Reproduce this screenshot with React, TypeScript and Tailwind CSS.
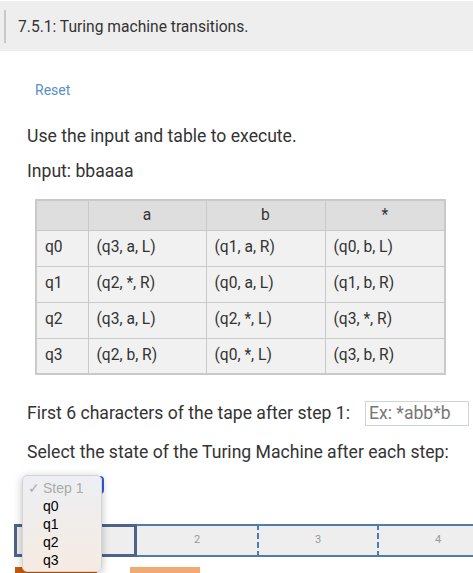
import React from 'react';

const rows = [
  ['q0', '(q3, a, L)', '(q1, a, R)', '(q0, b, L)'],
  ['q1', '(q2, *, R)', '(q0, a, L)', '(q1, b, R)'],
  ['q2', '(q3, a, L)', '(q2, *, L)', '(q3, *, R)'],
  ['q3', '(q2, b, R)', '(q0, *, L)', '(q3, b, R)'],
];

const App: React.FC = () => {
  return (
    <div
      className="w-[473px] h-[573px] overflow-hidden bg-white text-[#333]"
      style={{ fontFamily: 'Roboto, "Liberation Sans", sans-serif' }}
    >
      {/* Header */}
      <div className="mt-px h-[50px] bg-[#eeeeee] flex items-center pl-[4px]">
        <div className="w-[2px] h-[33px] bg-[#c8c8c8]" />
        <h1 className="ml-[12px] mt-[2px] text-[15.6px] leading-[20px] text-[#333] font-normal">
          7.5.1: Turing machine transitions.
        </h1>
      </div>

      <div className="pl-[35px] pt-[27px]">
        <button className="text-[14px] leading-[20px] text-[#5a8fc4]">Reset</button>
      </div>

      <div className="pl-[27px]">
        <p className="mt-[21px] text-[17.6px] leading-[26px]">Use the input and table to execute.</p>
        <p className="mt-[9px] text-[17.6px] leading-[26px]">Input: bbaaaa</p>

        {/* Table */}
        <table className="mt-[15px] ml-[8px] border-collapse border-2 border-[#c9c9c9] text-[15.6px] text-[#333]">
          <thead>
            <tr className="bg-[#dedede] h-[30px]">
              <th className="w-[52px] border border-[#c9c9c9]" />
              <th className="w-[118px] border border-[#c9c9c9] font-normal">a</th>
              <th className="w-[119px] border border-[#c9c9c9] font-normal">b</th>
              <th className="w-[120px] border border-[#c9c9c9] font-normal">*</th>
            </tr>
          </thead>
          <tbody>
            {rows.map((r) => (
              <tr key={r[0]} className="bg-[#f1f1f1] h-[36px]">
                {r.map((c, i) => (
                  <td key={i} className="border border-[#c9c9c9] pl-[8px] text-left">
                    {c}
                  </td>
                ))}
              </tr>
            ))}
          </tbody>
        </table>

        <div className="mt-[25px] flex items-center whitespace-nowrap">
          <span className="text-[17.6px] leading-[26px]">First 6 characters of the tape after step 1:</span>
          <input
            className="ml-[15px] w-[104px] h-[25px] shrink-0 border border-[#cfd6da] px-[3px] text-[17.6px] placeholder-[#777] outline-none"
            placeholder="Ex: *abb*b"
          />
        </div>
        <p className="mt-[13px] text-[17.6px] leading-[26px]">Select the state of the Turing Machine after each step:</p>
      </div>

      {/* Select + tape */}
      <div className="relative mt-[11px]">
        <div className="ml-[24px] w-[80px] h-[18px] rounded-[4px] border-2 border-[#2d5fd9] bg-white" />

        <div className="mt-[30px] flex h-[33px]">
          <div className="ml-[14px] w-[123px] shrink-0 border-[3px] border-[#4d6389] bg-[#eeeeee]" />
          {[2, 3, 4].map((n, i) => (
            <div
              key={n}
              className={`w-[120px] shrink-0 flex items-center justify-center bg-[#eeeeee] border-y-2 border-[#4f7cab] text-[11px] text-[#999] ${
                i > 0 ? 'border-l-2 border-l-[#4f7cab]' : ''
              }`}
              style={i > 0 ? { borderLeftStyle: 'dashed' } : undefined}
            >
              {n}
            </div>
          ))}
        </div>

        <div className="mt-[10px] flex">
          <div className="ml-[15px] w-[82px] h-[6px] bg-[#c85a0a]" />
          <div className="ml-[33px] w-[70px] h-[6px] bg-[#f0ab74]" />
        </div>

        {/* Native select popup */}
        <div
          className="absolute left-[22px] top-[-1px] w-[80px] h-[97px] rounded-[5px] border border-[#d4d4d4] bg-gradient-to-b from-[#eceff3] to-[#f6ebe2] shadow-[0_2px_8px_rgba(0,0,0,0.25)] pt-[3px] text-[14px] leading-[18px]"
          style={{ fontFamily: '"Liberation Sans", Arial, sans-serif' }}
        >
          <div className="flex text-[#aaa]">
            <span className="w-[20px] pl-[5px]">✓</span>
            <span>Step 1</span>
          </div>
          {['q0', 'q1', 'q2', 'q3'].map((q) => (
            <div key={q} className="pl-[20px] text-black">
              {q}
            </div>
          ))}
        </div>
      </div>
    </div>
  );
};

export default App;
